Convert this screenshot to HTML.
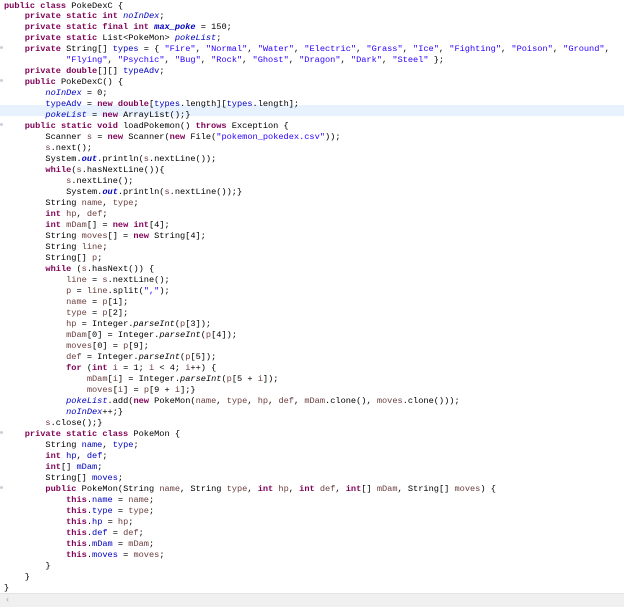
<!DOCTYPE html>
<html><head><meta charset="utf-8"><style>
html,body{margin:0;padding:0;background:#fff;width:624px;height:606px;overflow:hidden}
pre{margin:0;position:absolute;left:4px;top:0.5px;font-family:"Liberation Mono",monospace;font-size:8.65px;line-height:10.98px;color:#000;white-space:pre}
.k{color:#7f0055;font-weight:bold}
.s{color:#2a00ff}
.f{color:#0000c0}
.i{color:#0000c0;font-style:italic}
.l{color:#6a3e3e}
.hl{position:absolute;left:0;top:105px;width:624px;height:11px;background:#e8f2fe}
.sb{position:absolute;left:0;top:593px;width:624px;height:13px;background:#f0f0f0;border-top:1px solid #e4e4e4}
.sb span{position:absolute;left:6px;top:0;font:9px "Liberation Sans",sans-serif;color:#aaa}
.m{position:absolute;left:0;width:3px;height:3px;background:#c8d0dc;border-radius:2px}
</style></head><body>
<div class="hl"></div>
<div class="m" style="top:46px"></div>
<div class="m" style="top:79px"></div>
<div class="m" style="top:123px"></div>
<div class="m" style="top:431px"></div>
<div class="m" style="top:486px"></div>
<pre><span class="k">public class</span> PokeDexC {
    <span class="k">private static int</span> <span class="i">noInDex</span>;
    <span class="k">private static final int</span> <span class="i"><b>max_poke</b></span> = 150;
    <span class="k">private static</span> List&lt;PokeMon&gt; <span class="i">pokeList</span>;
    <span class="k">private</span> String[] <span class="f">types</span> = { <span class="s">"Fire"</span>, <span class="s">"Normal"</span>, <span class="s">"Water"</span>, <span class="s">"Electric"</span>, <span class="s">"Grass"</span>, <span class="s">"Ice"</span>, <span class="s">"Fighting"</span>, <span class="s">"Poison"</span>, <span class="s">"Ground"</span>,
            <span class="s">"Flying"</span>, <span class="s">"Psychic"</span>, <span class="s">"Bug"</span>, <span class="s">"Rock"</span>, <span class="s">"Ghost"</span>, <span class="s">"Dragon"</span>, <span class="s">"Dark"</span>, <span class="s">"Steel"</span> };
    <span class="k">private double</span>[][] <span class="f">typeAdv</span>;
    <span class="k">public</span> PokeDexC() {
        <span class="i">noInDex</span> = 0;
        <span class="f">typeAdv</span> = <span class="k">new double</span>[<span class="f">types</span>.length][<span class="f">types</span>.length];
        <span class="i">pokeList</span> = <span class="k">new</span> ArrayList();}
    <span class="k">public static void</span> loadPokemon() <span class="k">throws</span> Exception {
        Scanner <span class="l">s</span> = <span class="k">new</span> Scanner(<span class="k">new</span> File(<span class="s">"pokemon_pokedex.csv"</span>));
        <span class="l">s</span>.next();
        System.<span class="i"><b>out</b></span>.println(<span class="l">s</span>.nextLine());
        <span class="k">while</span>(<span class="l">s</span>.hasNextLine()){
            <span class="l">s</span>.nextLine();
            System.<span class="i"><b>out</b></span>.println(<span class="l">s</span>.nextLine());}
        String <span class="l">name</span>, <span class="l">type</span>;
        <span class="k">int</span> <span class="l">hp</span>, <span class="l">def</span>;
        <span class="k">int</span> <span class="l">mDam</span>[] = <span class="k">new int</span>[4];
        String <span class="l">moves</span>[] = <span class="k">new</span> String[4];
        String <span class="l">line</span>;
        String[] <span class="l">p</span>;
        <span class="k">while</span> (<span class="l">s</span>.hasNext()) {
            <span class="l">line</span> = <span class="l">s</span>.nextLine();
            <span class="l">p</span> = <span class="l">line</span>.split(<span class="s">","</span>);
            <span class="l">name</span> = <span class="l">p</span>[1];
            <span class="l">type</span> = <span class="l">p</span>[2];
            <span class="l">hp</span> = Integer.<i>parseInt</i>(<span class="l">p</span>[3]);
            <span class="l">mDam</span>[0] = Integer.<i>parseInt</i>(<span class="l">p</span>[4]);
            <span class="l">moves</span>[0] = <span class="l">p</span>[9];
            <span class="l">def</span> = Integer.<i>parseInt</i>(<span class="l">p</span>[5]);
            <span class="k">for</span> (<span class="k">int</span> <span class="l">i</span> = 1; <span class="l">i</span> &lt; 4; <span class="l">i</span>++) {
                <span class="l">mDam</span>[<span class="l">i</span>] = Integer.<i>parseInt</i>(<span class="l">p</span>[5 + <span class="l">i</span>]);
                <span class="l">moves</span>[<span class="l">i</span>] = <span class="l">p</span>[9 + <span class="l">i</span>];}
            <span class="i">pokeList</span>.add(<span class="k">new</span> PokeMon(<span class="l">name</span>, <span class="l">type</span>, <span class="l">hp</span>, <span class="l">def</span>, <span class="l">mDam</span>.clone(), <span class="l">moves</span>.clone()));
            <span class="i">noInDex</span>++;}
        <span class="l">s</span>.close();}
    <span class="k">private static class</span> PokeMon {
        String <span class="f">name</span>, <span class="f">type</span>;
        <span class="k">int</span> <span class="f">hp</span>, <span class="f">def</span>;
        <span class="k">int</span>[] <span class="f">mDam</span>;
        String[] <span class="f">moves</span>;
        <span class="k">public</span> PokeMon(String <span class="l">name</span>, String <span class="l">type</span>, <span class="k">int</span> <span class="l">hp</span>, <span class="k">int</span> <span class="l">def</span>, <span class="k">int</span>[] <span class="l">mDam</span>, String[] <span class="l">moves</span>) {
            <span class="k">this</span>.<span class="f">name</span> = <span class="l">name</span>;
            <span class="k">this</span>.<span class="f">type</span> = <span class="l">type</span>;
            <span class="k">this</span>.<span class="f">hp</span> = <span class="l">hp</span>;
            <span class="k">this</span>.<span class="f">def</span> = <span class="l">def</span>;
            <span class="k">this</span>.<span class="f">mDam</span> = <span class="l">mDam</span>;
            <span class="k">this</span>.<span class="f">moves</span> = <span class="l">moves</span>;
        }
    }
}</pre>
<div class="sb"><span>&lsaquo;</span></div>
</body></html>
